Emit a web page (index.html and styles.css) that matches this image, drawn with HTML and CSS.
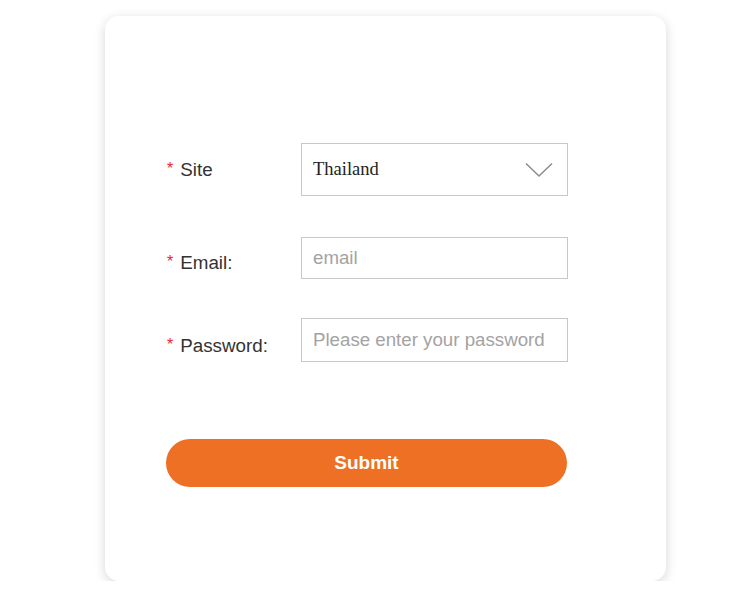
FILE: index.html
```html
<!DOCTYPE html>
<html>
<head>
    <link rel="stylesheet" href="styles.css">
</head>
<body>
    <div class="card">
        <form class="login-form">
            <label class="field-label label-site"><span class="required">*</span>Site</label>
            <div class="select-box">
                <span class="select-value">Thailand</span>
                <svg class="chevron" width="28" height="16" viewBox="0 0 28 16">
                    <path d="M1 1.5 L14 14 L27 1.5" fill="none" stroke="#8c8c8c" stroke-width="1.5"/>
                </svg>
            </div>

            <label class="field-label"><span class="required">*</span>Email:</label>
            <input class="input-field" type="text" placeholder="email">

            <label class="field-label"><span class="required">*</span>Password:</label>
            <input class="input-field" type="password" placeholder="Please enter your password">

            <button class="submit-button" type="button">Submit</button>
        </form>
    </div>
</body>
</html>
```

FILE: styles.css
```css
body {
    margin: 0;
    background: #ffffff;
    font-family: "Liberation Sans", Arial, sans-serif;
}

.card {
    width: 561px;
    height: 565px;
    box-sizing: border-box;
    margin: 16px 0 0 105px;
    padding: 127px 0 0 61px;
    background: #ffffff;
    border-radius: 14px;
    box-shadow: 0 3px 12px rgba(0, 0, 0, 0.16);
}

.login-form {
    display: grid;
    grid-template-columns: 135px 267px;
    grid-template-rows: 53px 42px 42px 48px;
    row-gap: 41px;
}

.field-label {
    display: flex;
    align-items: center;
    padding-top: 10px;
    font-size: 18.8px;
    color: #333333;
}

.label-site {
    padding-top: 1px;
}

.required {
    color: #f5222d;
    font-size: 16px;
    margin-right: 7px;
    margin-left: 1px;
    position: relative;
    top: -1px;
}

.select-box {
    display: flex;
    align-items: center;
    justify-content: space-between;
    padding: 0 14px 0 11px;
    border: 1px solid #c8c8cc;
    box-sizing: border-box;
}

.select-value {
    font-family: "Liberation Serif", "Times New Roman", serif;
    font-size: 18.5px;
    color: #222222;
}

.chevron {
    margin-top: 1px;
}

.input-field {
    margin: 0;
    padding: 0 11px;
    border: 1px solid #c8c8c8;
    box-sizing: border-box;
    font-family: "Liberation Sans", Arial, sans-serif;
    font-size: 18.7px;
    color: #333333;
    outline: none;
}

.input-field::placeholder {
    color: #a3a3a3;
}

.login-form .input-field:last-of-type {
    margin-top: -2px;
}

.submit-button {
    grid-column: 1 / 3;
    margin-top: 36px;
    width: 401px;
    height: 48px;
    border: none;
    border-radius: 24px;
    background: #ee7024;
    color: #ffffff;
    font-family: "Liberation Sans", Arial, sans-serif;
    font-weight: bold;
    font-size: 19px;
    cursor: pointer;
}
```
